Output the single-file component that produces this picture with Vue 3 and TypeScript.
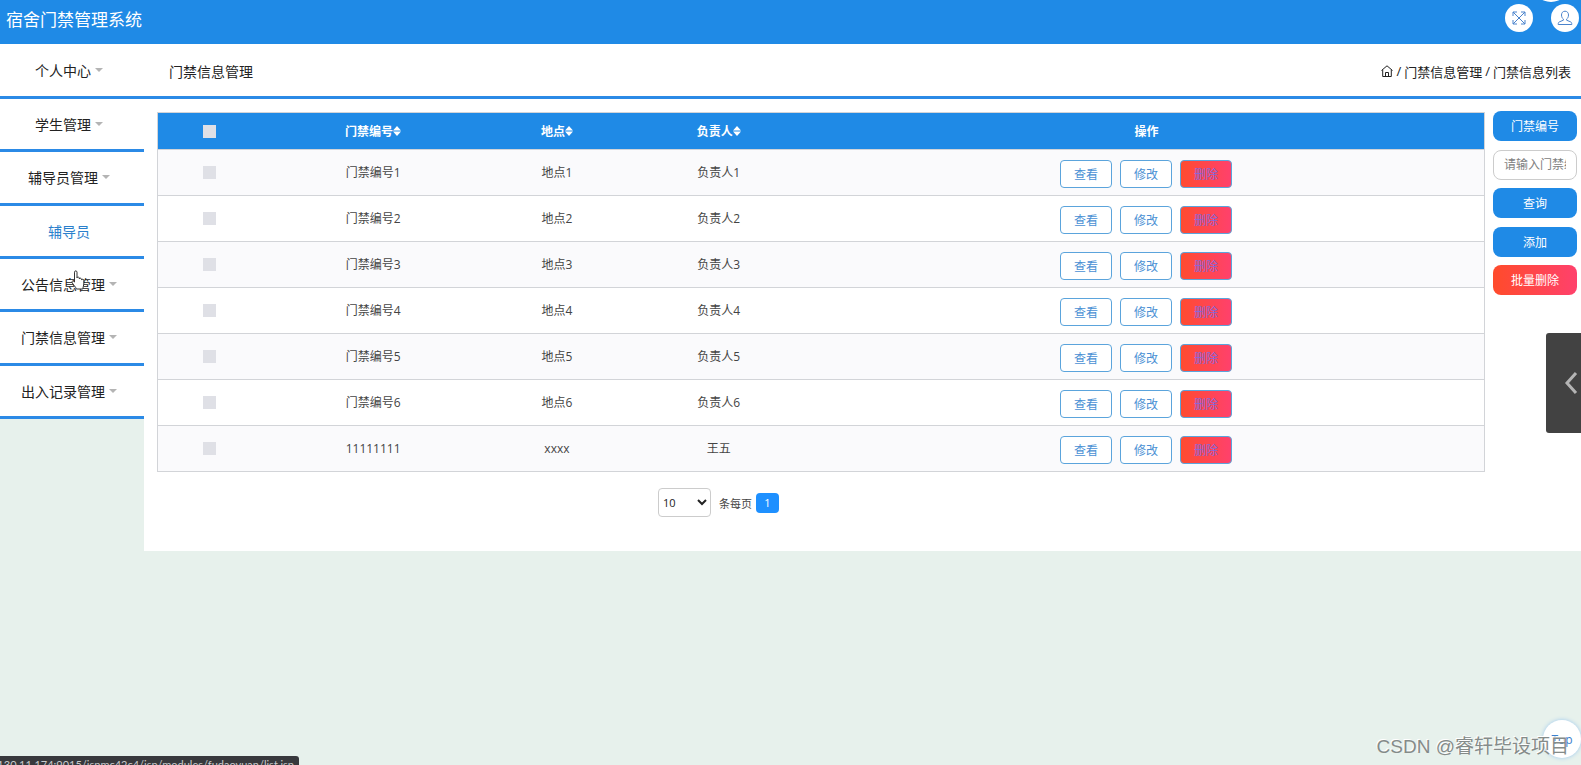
<script setup lang="ts">
import { ref } from 'vue'

interface MenuItem { label: string; caret: boolean; active?: boolean }
interface Gate { id: string; place: string; owner: string }

const menu: MenuItem[] = [
  { label: '个人中心', caret: true },
  { label: '学生管理', caret: true },
  { label: '辅导员管理', caret: true },
  { label: '辅导员', caret: false, active: true },
  { label: '公告信息管理', caret: true },
  { label: '门禁信息管理', caret: true },
  { label: '出入记录管理', caret: true },
]

const gates: Gate[] = [
  ...[1, 2, 3, 4, 5, 6].map((n) => ({ id: `门禁编号${n}`, place: `地点${n}`, owner: `负责人${n}` })),
  { id: '11111111', place: 'xxxx', owner: '王五' },
]

const columns = ['门禁编号', '地点', '负责人']
const keyword = ref('')
const pageSize = ref(10)
</script>

<template>
  <div class="app">
    <header class="header">
      <h1>宿舍门禁管理系统</h1>
      <div class="tools">
        <button type="button" class="round" aria-label="全屏">
          <svg viewBox="0 0 14 14" width="14" height="14">
            <path d="M1 5V1h4M9 1h4v4M13 9v4H9M5 13H1V9M1 1l12 12M13 1L1 13" />
          </svg>
        </button>
        <button type="button" class="round" aria-label="用户">
          <svg viewBox="0 0 16 16" width="16" height="16">
            <path d="M8 1.2c-2.2 0-3.5 1.6-3.5 3.8 0 1.900.8 3.300 1.900 4.100v1.100L2.300 11.900c-.8.400-1.100 1.200-1.100 2.600h13.600c0-1.400-.3-2.200-1.100-2.600L9.600 10.200V9.100c1.100-.8 1.900-2.200 1.900-4.100C11.500 2.800 10.200 1.200 8 1.200z" />
          </svg>
        </button>
      </div>
      <span class="bubble"></span>
    </header>

    <div class="body">
      <nav class="side">
        <a v-for="m in menu" :key="m.label" href="#" :class="{ active: m.active }">
          {{ m.label }}<i v-if="m.caret" class="caret"></i>
        </a>
      </nav>

      <main class="main">
        <div class="bar">
          <h2>门禁信息管理</h2>
          <div class="crumbs">
            <svg viewBox="0 0 12 12" width="12" height="12">
              <path d="M.5 5.500L6 .8l5.500 4.700M1.700 4.800v6.700h8.600V4.800M4.500 11.500V7.500h3v4" />
            </svg>
            <span>/</span><a href="#">门禁信息管理</a><span>/</span><span>门禁信息列表</span>
          </div>
        </div>

        <div class="content">
          <section class="list">
            <table>
              <colgroup>
                <col class="c-check"><col class="c-id"><col class="c-place"><col class="c-owner"><col>
              </colgroup>
              <thead>
                <tr>
                  <th><input type="checkbox" aria-label="全选"></th>
                  <th v-for="c in columns" :key="c">
                    <span class="sort">{{ c }}<svg viewBox="0 0 8 12" width="8" height="12"><path d="M4 1l4 4.500H0zM4 11l4-4.500H0z" /></svg></span>
                  </th>
                  <th>操作</th>
                </tr>
              </thead>
              <tbody>
                <tr v-for="g in gates" :key="g.id">
                  <td><input type="checkbox" :aria-label="g.id"></td>
                  <td>{{ g.id }}</td>
                  <td>{{ g.place }}</td>
                  <td>{{ g.owner }}</td>
                  <td>
                    <div class="ops">
                      <button type="button">查看</button>
                      <button type="button">修改</button>
                      <button type="button" class="del">删除</button>
                    </div>
                  </td>
                </tr>
              </tbody>
            </table>

            <div class="pager">
              <select id="size" v-model="pageSize">
                <option :value="10">10</option>
                <option :value="25">25</option>
              </select>
              <label for="size">条每页</label>
              <button type="button">1</button>
            </div>
          </section>

          <form class="search" @submit.prevent>
            <label for="keyword">门禁编号</label>
            <input id="keyword" v-model="keyword" type="text" placeholder="请输入门禁编号">
            <button type="submit">查询</button>
            <button type="button">添加</button>
            <button type="button" class="danger">批量删除</button>
          </form>
        </div>
      </main>
    </div>

    <button type="button" class="drawer" aria-label="展开">
      <svg viewBox="0 0 14 24" width="14" height="24"><path d="M12 2L3 12l9 10" /></svg>
    </button>
    <button type="button" class="top">Top</button>
    <div class="mark">CSDN @睿轩毕设项目</div>
    <div class="status">8.130.11.174:9015/jspmc42c4/jsp/modules/fudaoyuan/list.jsp</div>
    <svg class="hand" viewBox="0 0 14 20" width="14" height="20">
      <path d="M3.500 12V2.200C3.500.4 6 .4 6 2.200V8c0-1.300 2.300-1.300 2.300.2V9c0-1.200 2.200-1.100 2.200.3v.6c.3-1 2.300-.8 2.300.7V14c0 2-1 3-1 5H5.300C5 17 1.800 14.500 1 12.300c-.4-1.300 1.300-1.900 2.500-.3z" />
    </svg>
  </div>
</template>

<style>
html, body {
  margin: 0;
  background: #e7f1ec;
}
</style>

<style scoped>
.app {
  position: relative;
  min-height: 100vh;
  overflow: hidden;
  font-family: "Open Sans", "Noto Sans CJK SC", sans-serif;
  font-size: 12px;
  color: #444;
}
.app * { box-sizing: border-box; }
button, input, select {
  font: inherit;
  cursor: pointer;
}
a { color: inherit; text-decoration: none; }
svg { fill: none; stroke: currentColor; }

.header {
  position: relative;
  display: flex;
  justify-content: space-between;
  height: 44px;
  padding: 4px 2px 0 6px;
  background: #1f8ae6;
}
.header h1 {
  margin: 0;
  font-size: 17px;
  font-weight: 400;
  line-height: 32px;
  color: #fff;
}
.tools { display: flex; gap: 18px; }
.round {
  display: grid;
  place-items: center;
  width: 28px;
  height: 28px;
  padding: 0;
  border: 0;
  border-radius: 50%;
  background: #fff;
  color: #4a83cc;
}
.bubble {
  position: absolute;
  top: -36px;
  right: 11px;
  width: 38px;
  height: 38px;
  border-radius: 50%;
  background: #fff;
}

.body { display: flex; align-items: flex-start; }
.side {
  display: flex;
  flex: 0 0 144px;
  flex-direction: column;
  height: 375px;
  background: #fff;
  font-size: 14px;
  color: #222;
}
.side a {
  display: flex;
  flex: 1;
  align-items: center;
  justify-content: center;
  padding-right: 6px;
  border-bottom: 3px solid #2b8ae6;
}
.side a:first-child { flex: 0 0 55px; }
.side .active { color: #2b80cc; }
.caret {
  margin-left: 4px;
  border: 4px solid transparent;
  border-top-color: #b4b4b4;
  border-bottom: 0;
}

.main {
  flex: 1;
  min-width: 0;
  padding-bottom: 34px;
  background: #fff;
}
.bar {
  display: flex;
  align-items: center;
  justify-content: space-between;
  height: 55px;
  padding: 2px 10px 0 25px;
  border-bottom: 3px solid #2b8ae6;
  color: #222;
}
.bar h2 {
  margin: 0;
  font-size: 14px;
  font-weight: 400;
}
.crumbs {
  display: flex;
  align-items: center;
  gap: 3px;
  font-size: 13px;
}

.content {
  display: flex;
  align-items: flex-start;
  gap: 8px;
  padding: 12px 4px 0 13px;
}
.list { flex: 1; min-width: 0; padding-top: 1px; }
table {
  width: 100%;
  border: 1px solid #d2d4d8;
  border-collapse: collapse;
  table-layout: fixed;
}
.c-check { width: 7.8%; }
.c-id { width: 16.9%; }
.c-place { width: 10.8%; }
.c-owner { width: 13.6%; }
th, td {
  padding: 0 0 1px;
  border-bottom: 1px solid #d2d4d8;
  text-align: center;
}
th {
  height: 37px;
  padding-bottom: 0;
  background: #1f8ae6;
  color: #fff;
  font-weight: 700;
}
td { height: 46px; }
tbody tr:nth-child(odd) { background: #fafafc; }
.sort { display: inline-flex; align-items: center; }
.sort svg { fill: currentColor; stroke: none; }
input[type="checkbox"] {
  display: block;
  width: 13px;
  height: 13px;
  margin: 0 auto;
  appearance: none;
  background: #dfe0e6;
}
.ops {
  display: flex;
  justify-content: center;
  gap: 8px;
  padding: 3px 1px 0 0;
}
.ops button {
  width: 52px;
  height: 28px;
  padding: 0;
  border: 1px solid #5ba4dc;
  border-radius: 4px;
  background: #fff;
  color: #4a90d4;
}
.ops .del {
  background: linear-gradient(90deg, #ff4b30, #ff416c);
  color: #8468dc;
}

.pager {
  display: flex;
  align-items: center;
  justify-content: center;
  margin-top: 16px;
  padding-right: 205px;
  font-size: 11px;
}
.pager select {
  width: 53px;
  height: 29px;
  padding: 0;
  border: 1px solid #ccc;
  border-radius: 4px;
  background: #fff;
  color: #222;
}
.pager label { margin: 0 4px 0 8px; }
.pager button {
  width: 23px;
  height: 20px;
  padding: 0;
  border: 0;
  border-radius: 4px;
  background: #1e90ff;
  color: #fff;
}

.search {
  display: flex;
  flex: 0 0 84px;
  flex-direction: column;
  justify-content: space-between;
  min-height: 184px;
}
.search > * {
  width: 100%;
  height: 30px;
  padding: 1px 0 0;
  border: 0;
  border-radius: 8px;
  background: #1f8ae6;
  color: #fff;
  line-height: 30px;
  text-align: center;
}
.search input {
  padding: 1px 10px 0;
  border: 1px solid #ccc;
  background: #fff;
  color: #444;
  text-align: left;
}
.search input::placeholder { color: #808080; }
.search .danger { background: linear-gradient(90deg, #ff4b2b, #ff416c); }

.drawer {
  position: absolute;
  top: 333px;
  right: 0;
  width: 35px;
  height: 100px;
  padding: 0 3px 0 0;
  border: 0;
  border-radius: 3px 0 0 3px;
  background: #424242;
  color: #b4b4b4;
}
.drawer svg { display: block; margin-left: auto; stroke-width: 3; }
.top {
  position: absolute;
  right: 0;
  bottom: 7px;
  width: 38px;
  height: 38px;
  padding: 0;
  border: 0;
  border-radius: 50%;
  background: #fff;
  box-shadow: 0 0 4px #9cc8ee;
  color: #3b80cc;
}
.mark {
  position: absolute;
  right: 12px;
  bottom: 3px;
  font-family: "Liberation Sans", "Noto Sans CJK SC", sans-serif;
  font-size: 19px;
  line-height: 30px;
  color: #858b89;
  text-shadow: -1px -1px 0 #fff;
}
.status {
  position: absolute;
  bottom: 0;
  left: 0;
  display: flex;
  justify-content: flex-end;
  width: 299px;
  height: 9px;
  padding-right: 5px;
  overflow: hidden;
  border-radius: 0 3px 0 0;
  background: #38393d;
  color: #c8cacc;
  font-family: Lato, sans-serif;
  font-size: 11px;
  line-height: 18px;
  white-space: nowrap;
}
.hand {
  position: absolute;
  top: 270px;
  left: 71px;
  fill: #fff;
  stroke: #333;
}
</style>
